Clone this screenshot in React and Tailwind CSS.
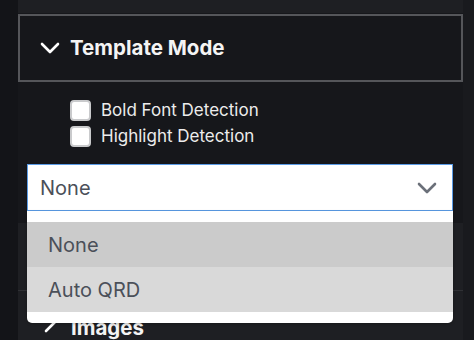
import React from "react";

function ChevronDown({ className }) {
  return (
    <svg className={className} width="20" height="12" viewBox="0 0 20 12" fill="none">
      <polyline points="2,2 10,10 18,2" stroke="currentColor" strokeWidth="2.6" strokeLinecap="round" strokeLinejoin="round" />
    </svg>
  );
}

function ChevronRight({ className }) {
  return (
    <svg className={className} width="14" height="24" viewBox="0 0 14 24" fill="none">
      <polyline points="2,2 12,12 2,22" stroke="currentColor" strokeWidth="2.6" strokeLinecap="round" strokeLinejoin="round" />
    </svg>
  );
}

function Checkbox({ label }) {
  return (
    <div className="h-[26px] flex items-center">
      <div className="w-[21px] h-[21px] rounded-[4px] bg-white border-2 border-[#c9cacc] shrink-0" />
      <span className="ml-[10px] text-[17px] leading-[25px] text-[#ececec]">{label}</span>
    </div>
  );
}

export default function App() {
  return (
    <div className="w-[474px] h-[340px] overflow-hidden bg-[#131418] flex font-['Inter',sans-serif]">
      <div className="w-[18px] shrink-0" />
      <div className="w-[445px] shrink-0 flex flex-col bg-[#16171b]">
        <div className="h-[13px] bg-[#1e1f23] shrink-0" />
        <div className="mt-px h-[68px] shrink-0 border-2 border-[#55565a] flex items-center">
          <ChevronDown className="ml-[20px] text-white" />
          <span className="ml-[10px] text-[20.5px] leading-[28px] font-bold text-[#f4f4f4]">Template Mode</span>
        </div>
        <div className="pl-[52px] pt-[15px] flex flex-col">
          <Checkbox label="Bold Font Detection" />
          <Checkbox label="Highlight Detection" />
        </div>
        <div className="relative mt-[15px] ml-[9px] w-[426px] z-10">
          <div className="h-[47px] bg-white border border-[#5a9be6] flex items-center justify-between pl-[12px] pr-[15px]">
            <span className="text-[20px] leading-[28px] text-[#4b5059]">None</span>
            <ChevronDown className="text-[#6b7079]" />
          </div>
          <div className="absolute top-full left-0 right-0 bg-white rounded-b-[5px] py-[11px] shadow-[0_1px_3px_rgba(0,0,0,0.25)]">
            <div className="h-[45px] bg-[#cbcbcb] flex items-center pl-[21px]">
              <span className="text-[20px] leading-[28px] text-[#4b5059]">None</span>
            </div>
            <div className="h-[45px] bg-[#d9d9d9] flex items-center pl-[21px]">
              <span className="text-[20px] leading-[28px] text-[#4b5059]">Auto QRD</span>
            </div>
          </div>
        </div>
        <div className="mt-[12px] h-[68px] shrink-0 bg-[#1e1f23] border-b border-[#303135]" />
        <div className="flex-1 bg-[#1e1f23] flex items-start pt-[23px]">
          <ChevronRight className="ml-[26px] -mt-[5px] text-white shrink-0" />
          <span className="ml-[13px] text-[20.5px] leading-[28px] font-bold text-[#f4f4f4]">Images</span>
        </div>
      </div>
      <div className="flex-1 bg-[#191a1e]" />
    </div>
  );
}
